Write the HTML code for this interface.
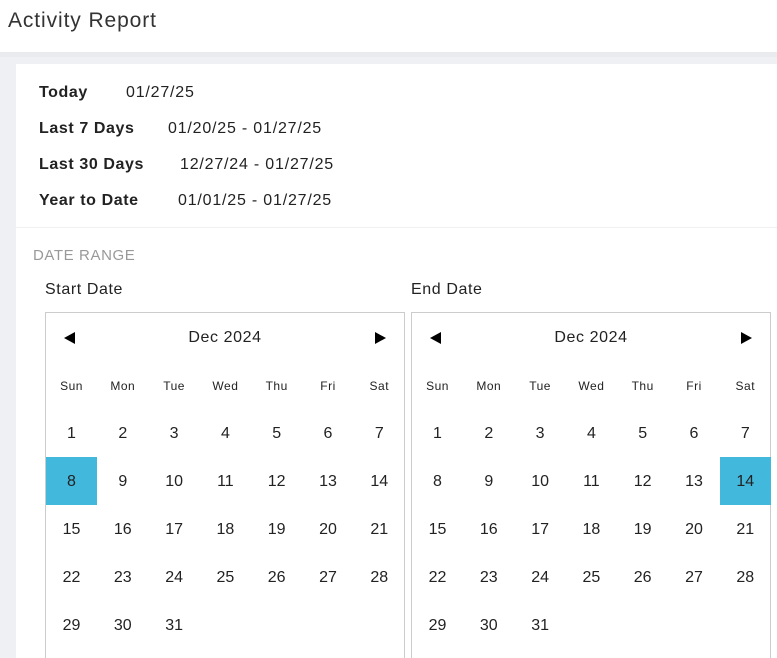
<!DOCTYPE html><html><head><style>
html{overflow:hidden;height:658px}
body{margin:0;width:777px;height:658px;overflow:hidden;background:#eef0f4;font-family:"Liberation Sans",sans-serif;color:#222;position:relative}
.hdr{position:absolute;left:0;top:0;width:777px;height:52px;background:#fff;box-shadow:0 2px 3px rgba(0,0,0,.05)}
.hdr span{position:absolute;left:8px;top:9px;font-size:21px;color:#333;letter-spacing:0.9px}
.band{position:absolute;left:0;top:52px;width:777px;height:5px;background:#e9ebee}
.card{position:absolute;left:16px;top:64px;width:761px;height:600px;background:#fff}
.row{position:absolute;font-size:16px;letter-spacing:0.8px}
.row b{position:absolute;left:0;top:0;white-space:nowrap;letter-spacing:0.6px}
.row span{position:absolute;top:0;white-space:nowrap}
.sep{position:absolute;left:16px;top:227px;width:761px;height:1px;background:#f1f1f1}
.t{position:absolute;white-space:nowrap;letter-spacing:0.6px}
.cal{position:absolute;top:312px;width:358px;height:360px;border:1px solid #ccc;background:#fff}
.cal .m{position:absolute;top:16px;left:0;width:100%;text-align:center;font-size:16px;letter-spacing:0.6px}
.cal .a{position:absolute;top:19px;width:0;height:0;border-top:6px solid transparent;border-bottom:6px solid transparent}
.c{position:absolute;width:51px;height:48px;line-height:50px;text-align:center;font-size:16px}
.w{position:absolute;width:51px;text-align:center;font-size:12px;top:66px;letter-spacing:0.5px}
.sel{background:#43b8dd}
</style></head><body>
<div class="hdr"><span>Activity Report</span></div>
<div class="band"></div>
<div class="card"></div>
<div class="row" style="left:39px;top:84px"><b>Today</b><span style="left:87px">01/27/25</span></div>
<div class="row" style="left:39px;top:120px"><b>Last 7 Days</b><span style="left:129px">01/20/25 - 01/27/25</span></div>
<div class="row" style="left:39px;top:156px"><b>Last 30 Days</b><span style="left:141px">12/27/24 - 01/27/25</span></div>
<div class="row" style="left:39px;top:192px"><b>Year to Date</b><span style="left:139px">01/01/25 - 01/27/25</span></div>
<div class="sep"></div>
<div class="t" style="left:33px;top:247px;font-size:15px;color:#999">DATE RANGE</div>
<div class="t" style="left:45px;top:281px;font-size:16px">Start Date</div>
<div class="t" style="left:411px;top:281px;font-size:16px">End Date</div>
<div id="c1" class="cal" style="left:45px"></div>
<div id="c2" class="cal" style="left:411px"></div>
<script>
function b(id,sel){var e=document.getElementById(id),h='<div class="m">Dec 2024</div><div class="a" style="left:18px;border-right:11px solid #000"></div><div class="a" style="right:18px;border-left:11px solid #000"></div>';
var d=['Sun','Mon','Tue','Wed','Thu','Fri','Sat'];
for(var i=0;i<7;i++)h+='<div class="w" style="left:'+(i*51.3)+'px">'+d[i]+'</div>';
for(var n=1;n<=31;n++){var k=n-1,c=k%7,r=Math.floor(k/7);h+='<div class="c'+(n==sel?' sel':'')+'" style="left:'+(c*51.3)+'px;top:'+(96+r*48)+'px">'+n+'</div>';}
e.innerHTML=h;}
b('c1',8);b('c2',14);
</script>
</body></html>
